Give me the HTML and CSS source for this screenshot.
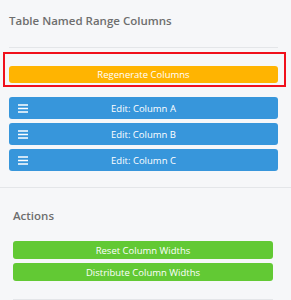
FILE: index.html
```html
<!DOCTYPE html>
<html lang="en">
<head>
    <meta charset="UTF-8">
    <meta name="viewport" content="width=device-width, initial-scale=1.0">
    <title>Table Named Range Columns</title>
    <link rel="stylesheet" href="styles.css">
</head>
<body>
    <!-- Columns Section -->
    <div class="section columns">
        <h2 class="section-title">Table Named Range Columns</h2>
        <div class="divider"></div>

        <!-- Highlighted action -->
        <div class="highlight">
            <button class="btn btn-orange">Regenerate Columns</button>
        </div>

        <div class="column-list">
            <button class="btn btn-blue">
                <svg class="grip" viewBox="0 0 10 9"><path d="M0 1h10M0 4.5h10M0 8h10"/></svg>
                Edit: Column A
            </button>
            <button class="btn btn-blue">
                <svg class="grip" viewBox="0 0 10 9"><path d="M0 1h10M0 4.5h10M0 8h10"/></svg>
                Edit: Column B
            </button>
            <button class="btn btn-blue">
                <svg class="grip" viewBox="0 0 10 9"><path d="M0 1h10M0 4.5h10M0 8h10"/></svg>
                Edit: Column C
            </button>
        </div>
    </div>

    <!-- Actions Section -->
    <div class="section actions">
        <h2 class="section-title">Actions</h2>
        <div class="action-list">
            <button class="btn btn-green">Reset Column Widths</button>
            <button class="btn btn-green">Distribute Column Widths</button>
        </div>
        <div class="divider"></div>
    </div>
</body>
</html>
```

FILE: styles.css
```css
/* Base Styles */
* {
    box-sizing: border-box;
    margin: 0;
    padding: 0;
}

body {
    font-family: 'Open Sans', sans-serif;
    background: #f6f7f9;
    width: 291px;
    height: 300px;
    overflow: hidden;
}

/* Sections */
.section-title {
    font-size: 11.5px;
    font-weight: 600;
    color: #6e6e6e;
    line-height: 15px;
}

.divider {
    height: 1px;
    background: #e4e6e9;
}

.columns {
    padding: 13px 13px 16px 9px;
    border-bottom: 1px solid #e4e6e9;
}

.columns .section-title {
    margin-bottom: 19px;
}

/* Red highlight box */
.highlight {
    margin: 4px -8px 0 -6px;
    padding: 12px 6px 2px 4px;
    border: 2px solid #f0101c;
}

.column-list {
    display: flex;
    flex-direction: column;
    gap: 4px;
    margin-top: 10px;
}

.actions {
    padding: 20px 18px 0 13px;
}

.actions .section-title {
    margin-bottom: 18px;
}

.action-list {
    display: flex;
    flex-direction: column;
    gap: 4px;
    margin-bottom: 18px;
}

/* Buttons */
.btn {
    position: relative;
    display: block;
    width: 100%;
    border: none;
    border-radius: 3px;
    font-family: 'Open Sans', sans-serif;
    font-size: 9.5px;
    color: #ffffff;
    text-align: center;
    cursor: pointer;
}

.btn-orange {
    height: 17px;
    background: #ffb401;
}

.btn-blue {
    height: 22px;
    background: #3796db;
}

.btn-green {
    height: 18px;
    background: #62c934;
}

.grip {
    position: absolute;
    left: 9px;
    top: 7px;
    width: 10px;
    height: 9px;
    stroke: #ffffff;
    stroke-width: 1.4;
}
```
